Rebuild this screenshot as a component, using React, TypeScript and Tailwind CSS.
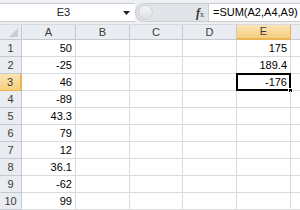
import React from 'react';

const colA = ['50', '-25', '46', '-89', '43.3', '79', '12', '36.1', '-62', '99'];
const colE: Record<number, string> = { 1: '175', 2: '189.4', 3: '-176' };
const letters = ['A', 'B', 'C', 'D', 'E'];
const rows = [1, 2, 3, 4, 5, 6, 7, 8, 9, 10];

const App = () => (
  <div className="w-[300px] h-[210px] overflow-hidden bg-white text-[11px] text-black font-['Liberation_Sans',Arial,sans-serif]">
    {/* formula bar */}
    <div className="h-[25px] flex items-start pt-[3px] bg-[#eef0f3] border-b border-[#d7dadf]">
      <div className="w-[135px] h-[19px] bg-white border-y border-[#c9ccd1] flex items-center">
        <span className="flex-1 text-center pl-[4px] text-[#1e1e1e]">E3</span>
        <svg width="7" height="4" viewBox="0 0 7 4" className="mr-[5px]">
          <path d="M0 0h7L3.5 4z" fill="#222" />
        </svg>
      </div>
      <div className="w-[73px] h-[19px] bg-[#e1e4e8] rounded-l-full border-y border-l border-[#c9ccd1] flex items-center">
        <div className="ml-[2px] w-[15px] h-[15px] rounded-full bg-gradient-to-b from-[#f4f5f7] to-[#dde0e4] border border-[#cdd1d6]" />
        <span className="ml-auto mr-[4px] italic font-['Liberation_Serif',serif] text-[12px] text-[#333] font-bold">
          f<span className="text-[8px] not-italic font-normal">x</span>
        </span>
      </div>
      <div className="flex-1 h-[19px] bg-white border-y border-l border-[#c9ccd1] flex items-center pl-[4px] text-[11px] whitespace-nowrap">
        =SUM(A2,A4,A9)
      </div>
    </div>

    {/* sheet */}
    <div className="grid grid-cols-[22px_54px_54px_53px_54px_54px_1fr] grid-rows-[15px_repeat(10,17px)]">
      <div className="relative bg-[#e9ecf0] border-r border-b border-[#c5cad1]">
        <svg width="9" height="9" viewBox="0 0 9 9" className="absolute right-[3px] bottom-[2px]">
          <path d="M9 0V9H0z" fill="#c9ced5" />
        </svg>
      </div>
      {letters.map((l) => (
        <div
          key={l}
          className={
            l === 'E'
              ? 'flex items-center justify-center bg-gradient-to-b from-[#fbe4b4] to-[#f7cf7c] border-r border-b-2 border-[#e8b552] text-[#3b3b3b]'
              : 'flex items-center justify-center bg-[#e9ecf0] border-r border-b border-[#c5cad1] text-[#3b3b3b]'
          }
        >
          {l}
        </div>
      ))}
      <div className="bg-[#e9ecf0] border-b border-[#c5cad1]" />

      {rows.map((r) => (
        <React.Fragment key={r}>
          <div
            className={
              r === 3
                ? 'flex items-center justify-center bg-gradient-to-b from-[#fbe4b4] to-[#f7cf7c] border-r-2 border-b border-[#e8b552] text-[#3b3b3b]'
                : 'flex items-center justify-center bg-[#e9ecf0] border-r border-b border-[#c5cad1] text-[#3b3b3b]'
            }
          >
            {r}
          </div>
          <div className="flex items-center justify-end pr-[3px] pt-[1px] border-r border-b border-[#dadcdd]">{colA[r - 1]}</div>
          <div className="border-r border-b border-[#dadcdd]" />
          <div className="border-r border-b border-[#dadcdd]" />
          <div className="border-r border-b border-[#dadcdd]" />
          <div className="relative flex items-center justify-end pr-[3px] pt-[1px] border-r border-b border-[#dadcdd]">
            {colE[r]}
            {r === 3 && (
              <>
                <div className="absolute inset-[-1px] border-2 border-black" />
                <div className="absolute right-[-3px] bottom-[-3px] w-[5px] h-[5px] bg-black border border-white" />
              </>
            )}
          </div>
          <div className="border-b border-[#dadcdd]" />
        </React.Fragment>
      ))}
    </div>
  </div>
);

export default App;
